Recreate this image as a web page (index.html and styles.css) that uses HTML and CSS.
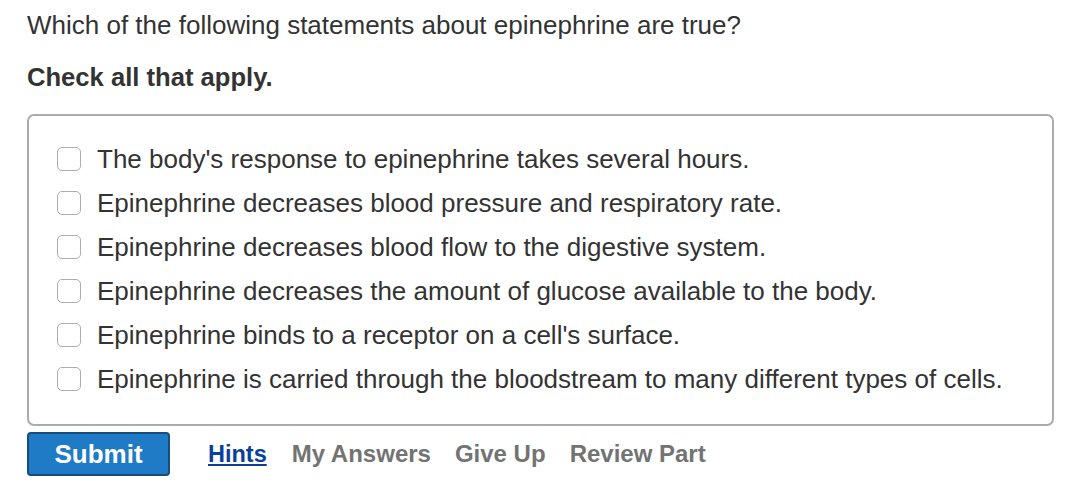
FILE: index.html
```html
<!DOCTYPE html>
<html>
<head>
<meta charset="utf-8">
<link rel="stylesheet" href="styles.css">
</head>
<body>
<div class="page">
  <p class="question">Which of the following statements about epinephrine are true?</p>
  <p class="instruction">Check all that apply.</p>
  <div class="options">
    <label class="option"><span class="box"></span><span>The body's response to epinephrine takes several hours.</span></label>
    <label class="option"><span class="box"></span><span>Epinephrine decreases blood pressure and respiratory rate.</span></label>
    <label class="option"><span class="box"></span><span>Epinephrine decreases blood flow to the digestive system.</span></label>
    <label class="option"><span class="box"></span><span>Epinephrine decreases the amount of glucose available to the body.</span></label>
    <label class="option"><span class="box"></span><span>Epinephrine binds to a receptor on a cell's surface.</span></label>
    <label class="option"><span class="box"></span><span>Epinephrine is carried through the bloodstream to many different types of cells.</span></label>
  </div>
  <div class="actions">
    <button class="submit">Submit</button>
    <a class="link hints" href="#">Hints</a>
    <a class="link" href="#">My Answers</a>
    <a class="link" href="#">Give Up</a>
    <a class="link" href="#">Review Part</a>
  </div>
</div>
</body>
</html>
```

FILE: styles.css
```css
html, body {
  margin: 0;
  padding: 0;
  background: #fff;
}
body {
  font-family: "Liberation Sans", Arial, sans-serif;
  color: #333;
}
.page {
  padding: 10px 22px 0 27px;
}
.question {
  margin: 0;
  font-size: 26px;
  line-height: 30px;
}
.instruction {
  margin: 22px 0 0 0;
  font-size: 25.6px;
  line-height: 30px;
  font-weight: bold;
}
.options {
  margin-top: 22px;
  border: 2px solid #ababab;
  border-radius: 7px;
  padding: 28px 0 30px 28px;
  display: flex;
  flex-direction: column;
  gap: 14px;
}
.option {
  display: flex;
  align-items: center;
  gap: 16px;
  font-size: 26px;
  line-height: 30px;
}
.box {
  width: 22px;
  height: 22px;
  border: 1px solid #adadad;
  border-radius: 5px;
  background: #fff;
  flex: none;
}
.actions {
  margin-top: 6px;
  display: flex;
  align-items: center;
}
.submit {
  width: 143px;
  height: 44px;
  background: #1f7bc6;
  border: 2px solid #174d7d;
  border-radius: 4px;
  color: #fff;
  font-family: "Liberation Sans", Arial, sans-serif;
  font-size: 26px;
  font-weight: bold;
  padding: 0;
  margin-right: 38px;
}
.link {
  font-size: 24px;
  font-weight: bold;
  color: #737373;
  text-decoration: none;
  margin-right: 24px;
}
.link.hints {
  color: #0b3f99;
  text-decoration: underline;
  font-size: 23.5px;
  margin-right: 25px;
}
```
